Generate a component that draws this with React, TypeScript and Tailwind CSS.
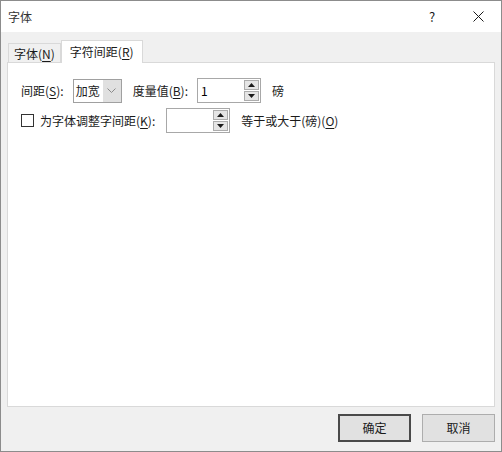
import React from "react";

const font = { fontFamily: '"Noto Sans CJK SC", "Liberation Sans", sans-serif' };

// label with an access key letter underlined, e.g. 间距(S):
const Label = ({ text, hotkey, tail = "" }: { text: string; hotkey: string; tail?: string }) => (
  <span className="whitespace-nowrap">
    {text}(<span className="underline underline-offset-2">{hotkey}</span>){tail}
  </span>
);

const SpinButtons = () => (
  <div className="flex h-full w-[15px] flex-col gap-[1px] py-[1px]">
    <div className="flex flex-1 items-center justify-center border border-[#acacac] bg-[#e5e5e5]">
      <svg width="7" height="4" viewBox="0 0 7 4">
        <path d="M0 4 L3.5 0 L7 4 Z" fill="#1a1a1a" />
      </svg>
    </div>
    <div className="flex flex-1 items-center justify-center border border-[#acacac] bg-[#e5e5e5]">
      <svg width="7" height="4" viewBox="0 0 7 4">
        <path d="M0 0 L3.5 4 L7 0 Z" fill="#1a1a1a" />
      </svg>
    </div>
  </div>
);

const SpinBox = ({ value = "" }: { value?: string }) => (
  <div className="flex h-[25px] w-[64px] items-stretch border border-[#a8a8a8] bg-white pr-[1px]">
    <div className="flex flex-1 items-center pl-[3px] text-[12px] text-black">{value}</div>
    <SpinButtons />
  </div>
);

export default function App() {
  return (
    <div
      className="flex h-[452px] w-[502px] flex-col border border-[#8c8c8c] bg-[#f0f0f0] text-[12px] text-[#1a1a1a]"
      style={font}
    >
      {/* title bar */}
      <div className="flex h-[31px] items-center bg-white pl-[7px]">
        <span className="flex-1 text-[#333333]">字体</span>
        <span className="w-[46px] text-center text-[13px]">?</span>
        <span className="flex w-[46px] items-center justify-center">
          <svg width="11" height="11" viewBox="0 0 11 11">
            <path d="M0.5 0.5 L10.5 10.5 M10.5 0.5 L0.5 10.5" stroke="#1a1a1a" strokeWidth="1" />
          </svg>
        </span>
      </div>

      {/* tabs */}
      <div className="flex h-[30px] items-end pl-[7px] pt-[7px]">
        <div className="mb-[-1px] flex h-[20px] items-center border border-b-0 border-[#d9d9d9] bg-[#f0f0f0] px-[5px]">
          <Label text="字体" hotkey="N" />
        </div>
        <div className="relative z-10 mb-[-1px] flex h-[23px] items-center border border-b-0 border-[#d9d9d9] bg-white px-[8px]">
          <Label text="字符间距" hotkey="R" />
        </div>
      </div>

      {/* page */}
      <div className="mx-[6px] flex h-[345px] flex-col gap-[5px] border border-[#d9d9d9] bg-white pl-[13px] pt-[15px]">
        <div className="flex items-center">
          <Label text="间距" hotkey="S" tail=":" />
          <div className="ml-[9px] flex h-[24px] w-[49px] items-stretch border border-[#a0a0a0]">
            <span className="flex flex-1 items-center pl-[2px]">加宽</span>
            <span className="flex w-[18px] items-center justify-center bg-[#e0e0e0]">
              <svg width="9" height="5" viewBox="0 0 9 5">
                <path d="M0.5 0.5 L4.5 4.5 L8.5 0.5" stroke="#8a8a8a" fill="none" strokeWidth="1" />
              </svg>
            </span>
          </div>
          <span className="ml-[11px]">
            <Label text="度量值" hotkey="B" tail=":" />
          </span>
          <div className="ml-[9px]">
            <SpinBox value="1" />
          </div>
          <span className="ml-[11px]">磅</span>
        </div>

        <div className="flex items-center">
          <span className="h-[13px] w-[13px] border border-[#333333] bg-white" />
          <span className="ml-[6px]">
            <Label text="为字体调整字间距" hotkey="K" tail=":" />
          </span>
          <div className="ml-[11px]">
            <SpinBox />
          </div>
          <span className="ml-[11px]">
            等于或大于(磅)(<span className="underline underline-offset-2">O</span>)
          </span>
        </div>
      </div>

      {/* buttons */}
      <div className="flex flex-1 items-start justify-end gap-[11px] pr-[6px] pt-[7px]">
        <button className="flex h-[28px] w-[73px] items-center justify-center border-2 border-[#4a4a4a] bg-[#e1e1e1]">
          确定
        </button>
        <button className="flex h-[28px] w-[73px] items-center justify-center border border-[#adadad] bg-[#e1e1e1]">
          取消
        </button>
      </div>
    </div>
  );
}
